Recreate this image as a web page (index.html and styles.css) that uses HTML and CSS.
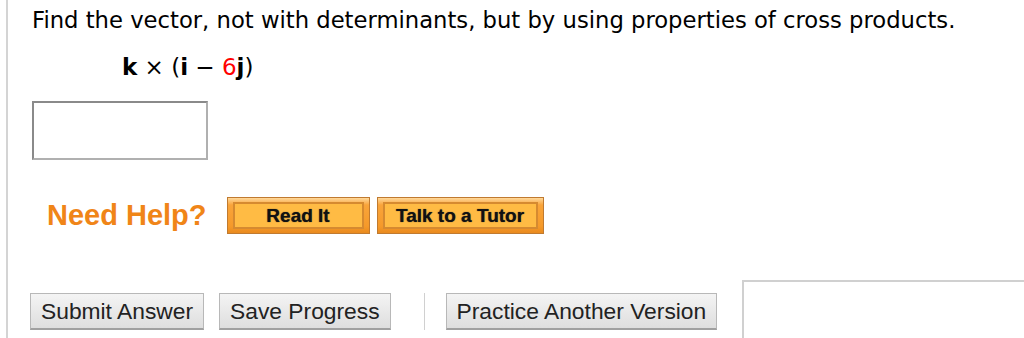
FILE: index.html
```html
<!DOCTYPE html>
<html>
<head>
<meta charset="utf-8">
<link rel="stylesheet" href="styles.css">
</head>
<body>
<div class="page">
  <div class="question">
    <p class="prompt">Find the vector, not with determinants, but by using properties of cross products.</p>
    <p class="expr"><b>k</b> × (<b>i</b> − <span class="num">6</span><b>j</b>)</p>
    <div class="answer"></div>
    <div class="help">
      <span class="help-label">Need Help?</span>
      <span class="hbtn read"><span class="hbtn-in">Read It</span></span>
      <span class="hbtn tutor"><span class="hbtn-in">Talk to a Tutor</span></span>
    </div>
  </div>
  <div class="actions">
    <button class="btn">Submit Answer</button>
    <button class="btn">Save Progress</button>
    <span class="sep"></span>
    <button class="btn">Practice Another Version</button>
    <div class="side"></div>
  </div>
</div>
</body>
</html>
```
FILE: styles.css
```css
html, body {
  margin: 0;
  padding: 0;
  background: #fff;
}
.page {
  margin-left: 6px;
  border-left: 2px solid #d4d4d4;
  height: 338px;
  box-sizing: border-box;
  padding-left: 24px;
  overflow: hidden;
}
.question {
  font-family: "DejaVu Sans", Verdana, sans-serif;
  color: #000;
}
.prompt {
  margin: 0;
  padding-top: 6px;
  font-size: 22.7px;
  line-height: 28px;
}
.expr {
  margin: 0;
  padding-top: 19px;
  padding-left: 90px;
  font-size: 23px;
  line-height: 28px;
}
.num {
  color: #ff0000;
}
.answer {
  margin-top: 20px;
  width: 172px;
  height: 55px;
  border: 2px solid #8a8a8a;
  border-right-color: #b0b0b0;
  border-bottom-color: #b0b0b0;
}
.help {
  display: flex;
  align-items: center;
  margin-top: 37px;
  padding-left: 15px;
  height: 37px;
}
.help-label {
  font-family: "Liberation Sans", Arial, sans-serif;
  font-weight: bold;
  font-size: 29px;
  color: #f08518;
  margin-right: 20px;
}
.hbtn {
  display: inline-block;
  box-sizing: border-box;
  height: 37px;
  padding: 4px 5px;
  background: linear-gradient(#ffd89a, #f9a43a 20%, #f59a2a 80%, #e98a1e);
  border: 1px solid #c07a30;
  margin-right: 7px;
}
.hbtn-in {
  display: flex;
  align-items: center;
  justify-content: center;
  box-sizing: border-box;
  height: 27px;
  border: 2px solid #d68a30;
  background: #ffbb44;
  font-family: "Liberation Sans", Arial, sans-serif;
  font-weight: bold;
  font-size: 19px;
  color: #111;
  text-shadow: 0 0 1px #333;
}
.read { width: 143px; }
.tutor { width: 167px; }
.actions {
  display: flex;
  align-items: flex-start;
  margin-top: 46px;
  margin-left: -2px;
}
.btn {
  margin-top: 13px;
  height: 37px;
  box-sizing: border-box;
  padding: 0 10px;
  font-family: "Liberation Sans", Arial, sans-serif;
  font-size: 22.8px;
  color: #222;
  background: linear-gradient(#f4f4f4, #dedede);
  border: 1px solid #b8b8b8;
  border-bottom: 2px solid #a0a0a0;
  border-radius: 0;
  margin-right: 15px;
}
.sep {
  margin-top: 13px;
  width: 1px;
  height: 37px;
  background: #d0d0d0;
  margin-left: 18px;
  margin-right: 21px;
}
.side {
  margin-left: 10px;
  flex: 1;
  height: 80px;
  border-top: 2px solid #d0d0d0;
  border-left: 2px solid #d0d0d0;
}
```
